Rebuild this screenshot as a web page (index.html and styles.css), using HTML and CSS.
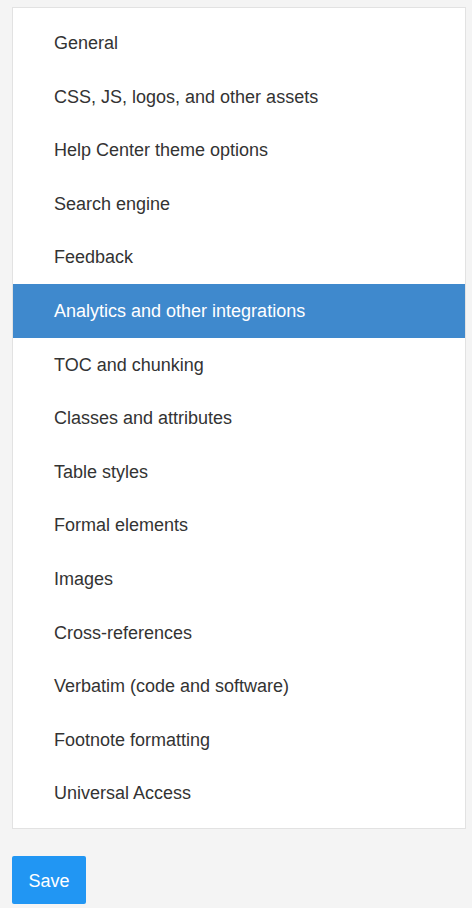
FILE: index.html
```html
<!DOCTYPE html>
<html>
<head>
<meta charset="utf-8">
<link rel="stylesheet" href="styles.css">
</head>
<body>
<div class="page">
  <nav class="menu">
    <a class="item">General</a>
    <a class="item">CSS, JS, logos, and other assets</a>
    <a class="item">Help Center theme options</a>
    <a class="item">Search engine</a>
    <a class="item">Feedback</a>
    <a class="item active">Analytics and other integrations</a>
    <a class="item">TOC and chunking</a>
    <a class="item">Classes and attributes</a>
    <a class="item">Table styles</a>
    <a class="item">Formal elements</a>
    <a class="item">Images</a>
    <a class="item">Cross-references</a>
    <a class="item">Verbatim (code and software)</a>
    <a class="item">Footnote formatting</a>
    <a class="item">Universal Access</a>
  </nav>
  <div class="actions">
    <button class="save">Save</button>
  </div>
</div>
</body>
</html>
```
FILE: styles.css
```css
html, body {
  margin: 0;
  padding: 0;
  background: #ffffff;
}
body {
  font-family: "Liberation Sans", Arial, Helvetica, sans-serif;
  color: #333333;
}
.page {
  width: 472px;
  height: 908px;
  box-sizing: border-box;
  background: #f4f4f4;
  padding: 7px 6px 0 12px;
}
.menu {
  display: flex;
  flex-direction: column;
  background: #ffffff;
  border: 1px solid #e2e2e2;
  padding: 8px 0;
}
.item {
  display: block;
  height: 53.6px;
  box-sizing: border-box;
  padding: 2px 0 0 41px;
  line-height: 51.6px;
  font-size: 18px;
  color: #333333;
}
.item.active {
  background: #3f89cd;
  color: #ffffff;
}
.actions {
  padding-top: 27px;
}
.save {
  width: 74px;
  height: 48px;
  border: none;
  border-radius: 2px;
  background: #2196f3;
  color: #ffffff;
  font-family: "Liberation Sans", Arial, Helvetica, sans-serif;
  font-size: 18px;
  padding: 3px 0 0 0;
}
```
